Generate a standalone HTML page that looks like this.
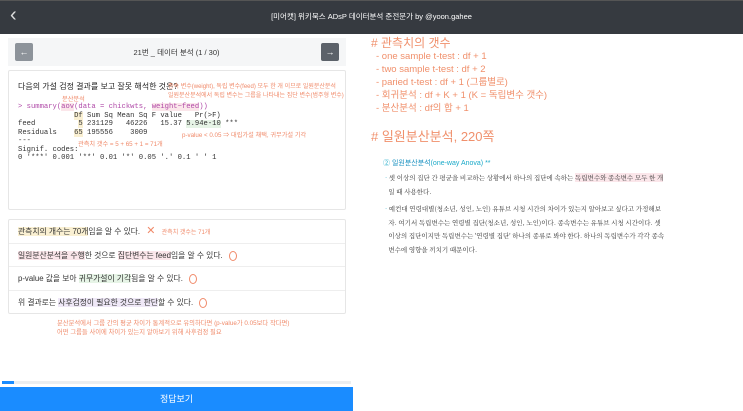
<!DOCTYPE html>
<html><head><meta charset="utf-8"><style>
*{margin:0;padding:0;box-sizing:border-box}
body{width:743px;height:411px;overflow:hidden;background:#fff;font-family:"Liberation Sans","Noto Sans CJK KR",sans-serif;position:relative}
.hdr{position:absolute;left:0;top:0;width:743px;height:34px;background:#363a40;color:#fff;font-size:7.5px;text-align:center;line-height:32px;border-top:1px solid #555}
.abs{position:absolute}
.nav{left:8px;top:38px;width:338px;height:28px;background:#f5f6f7}
.btn{width:18px;height:18px;border-radius:2px;color:#fff;font-size:9px;text-align:center;line-height:18px}
.card{left:8px;top:70px;width:338px;height:140px;border:1px solid #e6e6e6;border-radius:2px}
.mono{font-family:"Liberation Mono",monospace;font-size:7.2px;line-height:8.5px;white-space:pre;color:#333}
.red{color:#f08a6a;font-size:6.2px;font-family:"Liberation Sans","Noto Sans CJK KR",sans-serif}
.opts{left:8px;top:219px;width:338px;height:95px;border:1px solid #e6e6e6;border-radius:2px}
.opt{height:23.7px;border-bottom:1px solid #eee;font-size:7.8px;line-height:23px;padding-left:9px;color:#333}
.opt:last-child{border:none}
.o{display:inline-block;width:8px;height:10px;border:1.2px solid #f08a6a;border-radius:50%;vertical-align:middle;margin-left:4px}
.r{color:#f08a6a;font-family:"Liberation Sans","Noto Sans CJK KR",sans-serif}
.hy{background:#faf0d2}.hp{background:#fbe6ea}.hg{background:#e6f4e6}.hv{background:#efe8f7}
</style></head><body>
<div class="hdr"><span style="position:absolute;left:10px;top:-2px;font-size:20px;color:#ddd">&#8249;</span>[미어캣] 위키북스 ADsP 데이터분석 준전문가 by @yoon.gahee</div>

<div class="abs nav"></div>
<div class="abs btn" style="left:15px;top:43px;background:#8d939a">&#8592;</div>
<div class="abs btn" style="left:321px;top:43px;background:#5c626a">&#8594;</div>
<div class="abs" style="left:0;width:353px;top:47px;text-align:center;font-size:7.5px;color:#333">21번 _ 데이터 분석 (1 / 30)</div>

<div class="abs card"></div>
<div class="abs" style="left:18px;top:81px;font-size:8px;color:#222">다음의 가설 검정 결과를 보고 잘못 해석한 것은?</div>
<div class="abs red" style="left:168px;top:83px;line-height:9px;font-size:6px">종속 변수(weight), 독립 변수(feed) 모두 한 개 이므로 일원분산분석<br>일원분산분석에서 독립 변수는 그룹을 나타내는 집단 변수(범주형 변수)</div>
<div class="abs red" style="left:62px;top:94px">분산분석</div>
<div class="abs mono" style="left:18px;top:103px"><span style="color:#b04aa8">&gt; summary(<span class="hp">aov</span>(data = chickwts, <span class="hp">weight~feed</span>))</span>
             <span class="hy">Df</span> Sum Sq Mean Sq F value   Pr(&gt;F)
feed          <span class="hy">5</span> 231129   46226   15.37 <span class="hg">5.94e-10</span> ***
Residuals    <span class="hy">65</span> 195556    3009
---
Signif. codes:
0 '***' 0.001 '**' 0.01 '*' 0.05 '.' 0.1 ' ' 1</div>
<div class="abs red" style="left:182px;top:130px">p-value &lt; 0.05 ⇒ 대립가설 채택, 귀무가설 기각</div>
<div class="abs red" style="left:78px;top:139px">관측치 갯수 = 5 + 65 + 1 = 71개</div>

<div class="abs opts">
<div class="opt"><span class="hy">관측치의 개수는 70개</span>임을 알 수 있다. <span class="r" style="font-size:11px;margin-left:4px">✕</span> <span class="r" style="font-size:6px;margin-left:4px">관측치 갯수는 71개</span></div>
<div class="opt"><span class="hp">일원분산분석을 수행</span>한 것으로 <span class="hp">집단변수는 feed</span>임을 알 수 있다. <span class="o"></span></div>
<div class="opt">p-value 값을 보아 <span class="hg">귀무가설이 기각</span>됨을 알 수 있다. <span class="o"></span></div>
<div class="opt">위 결과로는 <span class="hv">사후검정이 필요한 것으로 판단</span>할 수 있다. <span class="o"></span></div>
</div>
<div class="abs red" style="left:57px;top:319px;line-height:9px;font-size:6.3px">분산분석에서 그룹 간의 평균 차이가 통계적으로 유의하다면 (p-value가 0.05보다 작다면)<br>어떤 그룹들 사이에 차이가 있는지 알아보기 위해 사후검정 필요</div>

<div class="abs" style="left:2px;top:381px;width:349px;height:3px;background:#eceef0"></div>
<div class="abs" style="left:2px;top:381px;width:12px;height:3px;background:#1a8cff"></div>
<div class="abs" style="left:0;top:387px;width:353px;height:24px;background:#1a8cff;color:#fff;font-size:9px;text-align:center;line-height:24px">정답보기</div>

<div class="abs" style="left:371px;top:37px;color:#f0906c;font-size:12px;line-height:13px">
<div># 관측치의 갯수</div>
<div style="font-size:9.5px;line-height:13px;padding-left:5px">- one sample t-test : df + 1<br>- two sample t-test : df + 2<br>- paried t-test : df + 1 (그룹별로)<br>- 회귀분석 : df + K + 1 (K = 독립변수 갯수)<br>- 분산분석 : df의 합 + 1</div>
<div style="margin-top:15px;font-size:13px"># 일원분산분석, 220쪽</div>
</div>
<div class="abs" style="left:383px;top:158px;font-size:7px;color:#1aa9c8">② <span style="color:#1890c0">일원분산분석</span>(one-way Anova) **</div>
<div class="abs" style="left:385px;top:171px;font-family:'Noto Serif CJK SC',serif;font-size:6.5px;line-height:13.5px;color:#333;width:300px;white-space:nowrap">
<div><span style="color:#1aa9c8">·</span> 셋 이상의 집단 간 평균을 비교하는 상황에서 하나의 집단에 속하는 <span class="hp">독립변수와 종속변수 모두 한 개</span><br>&nbsp;&nbsp;일 때 사용한다.</div>
<div style="margin-top:4px"><span style="color:#1aa9c8">·</span> 예컨대 연령대별(청소년, 성인, 노인) 유튜브 시청 시간의 차이가 있는지 알아보고 싶다고 가정해보<br>&nbsp;&nbsp;자. 여기서 독립변수는 연령별 집단(청소년, 성인, 노인)이다. 종속변수는 유튜브 시청 시간이다. 셋<br>&nbsp;&nbsp;이상의 집단이지만 독립변수는 '연령별 집단' 하나의 종류로 봐야 한다. 하나의 독립변수가 각각 종속<br>&nbsp;&nbsp;변수에 영향을 끼치기 때문이다.</div>
</div>
</body></html>
